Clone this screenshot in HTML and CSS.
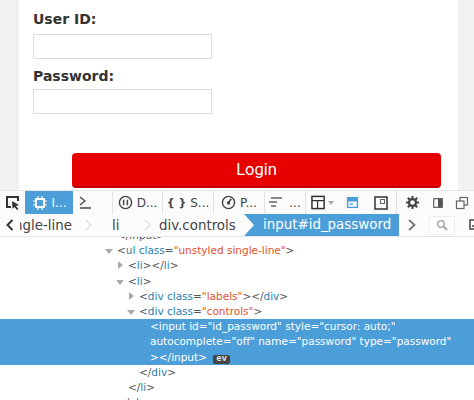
FILE: index.html
```html
<!DOCTYPE html>
<html lang="en">
<head>
<meta charset="utf-8">
<title>Login with devtools</title>
<link rel="stylesheet" href="styles.css">
</head>
<body>
<section class="page">
  <div class="card">
    <label class="label first">User ID:</label>
    <div class="field"></div>
    <label class="label second">Password:</label>
    <div class="field"></div>
    <button class="login">Login</button>
  </div>
</section>
<div class="toolbar">
  <div class="tool picker"><svg width="16" height="16" viewBox="0 0 16 16"><path d="M6 12H2V2h11v4" fill="none" stroke="#333" stroke-width="2"/><path d="M7 6l7 4-3 1 2.500 3-1.500 1-2.500-3-2 2z" fill="#333"/></svg></div>
  <div class="tool inspector active"><svg width="16" height="16" viewBox="0 0 16 16"><rect x="4" y="4" width="8" height="8" fill="none" stroke="#fff" stroke-width="2"/><path d="M6 1v3M10 1v3M6 12v3M10 12v3M1 6h3M1 10h3M12 6h3M12 10h3" stroke="#fff" stroke-width="1.200"/></svg><span>I...</span></div>
  <div class="tool console"><svg width="16" height="16" viewBox="0 0 16 16"><path d="M3 2l5 4-5 4" fill="none" stroke="#444" stroke-width="1.300"/><path d="M3 13h11" stroke="#444" stroke-width="1.500"/></svg></div>
  <div class="tool debugger sep"><svg width="15" height="15" viewBox="0 0 16 16"><circle cx="8" cy="8" r="6.500" fill="none" stroke="#444" stroke-width="1.500"/><path d="M6 5v6M10 5v6" stroke="#444" stroke-width="1.600"/></svg><span>D...</span></div>
  <div class="tool style sep"><span class="braces">{ }</span><span>S...</span></div>
  <div class="tool perf sep"><svg width="15" height="15" viewBox="0 0 16 16"><circle cx="8" cy="8" r="6.500" fill="none" stroke="#444" stroke-width="1.500"/><path d="M8 8l3-4" stroke="#444" stroke-width="1.500"/><circle cx="8" cy="8.500" r="1.800" fill="#444"/></svg><span>P...</span></div>
  <div class="tool network sep"><svg width="14" height="13" viewBox="0 0 14 13"><path d="M2 2h11M0 6h8M2 10h5" stroke="#666" stroke-width="1.700"/></svg><span>...</span></div>
  <div class="tool layout sep"><svg width="15" height="15" viewBox="0 0 16 16"><rect x="1" y="1.500" width="13" height="13" fill="none" stroke="#333" stroke-width="1.600"/><path d="M1 6h13M7 6v8" stroke="#333" stroke-width="1.300"/></svg><i class="caret"></i></div>
  <div class="tool dock"><svg width="13" height="13" viewBox="0 0 14 14"><rect x="1" y="1" width="12" height="12" fill="#4c9ed9"/><rect x="2.500" y="6" width="9" height="5.500" fill="#fff"/><rect x="3.500" y="8" width="4" height="1.500" fill="#4c9ed9"/></svg></div>
  <div class="tool frame"><svg width="14" height="14" viewBox="0 0 14 14"><rect x="1" y="1" width="12" height="12" fill="none" stroke="#333" stroke-width="1.500"/><rect x="6.500" y="3.500" width="4" height="4" fill="none" stroke="#666"/></svg></div>
  <div class="tool gear"><svg width="15" height="15" viewBox="0 0 16 16"><circle cx="8" cy="8" r="3.700" fill="none" stroke="#444" stroke-width="2.400"/><path d="M8 1v3M8 12v3M1 8h3M12 8h3M3 3l2 2M11 11l2 2M13 3l-2 2M5 11l-2 2" stroke="#444" stroke-width="2.200"/></svg></div>
  <div class="tool side"><svg width="12" height="12" viewBox="0 0 14 14"><rect x="2" y="2" width="10" height="10" fill="none" stroke="#555" stroke-width="1.300"/><rect x="7" y="2" width="5" height="10" fill="#555"/></svg></div>
  <div class="tool windows"><svg width="14" height="14" viewBox="0 0 14 14"><rect x="5" y="1.500" width="7.500" height="7.500" fill="none" stroke="#666" stroke-width="1.200"/><rect x="1.500" y="5" width="7.500" height="7.500" fill="#fff" stroke="#666" stroke-width="1.200"/></svg></div>
</div>
<nav class="crumbs">
  <svg class="back" width="10" height="14" viewBox="0 0 10 14"><path d="M7.500 2L2.500 7l5 5" fill="none" stroke="#333" stroke-width="2"/></svg>
  <span class="crumb clip"><span>single-line</span></span>
  <svg class="chev c1" width="8" height="14" viewBox="0 0 8 14"><path d="M1 2l5 5-5 5" fill="none" stroke="#ddd" stroke-width="1.200"/></svg>
  <span class="crumb li">li</span>
  <svg class="chev c2" width="8" height="14" viewBox="0 0 8 14"><path d="M1 2l5 5-5 5" fill="none" stroke="#ddd" stroke-width="1.200"/></svg>
  <span class="crumb div">div.controls</span>
  <span class="crumb current">input#id_password</span>
  <svg class="next" width="10" height="14" viewBox="0 0 10 14"><path d="M2 2l5.500 5L2 12" fill="none" stroke="#777" stroke-width="1.800"/></svg>
  <span class="search"><svg width="12" height="12" viewBox="0 0 12 12"><circle cx="5" cy="5" r="3.300" fill="none" stroke="#aaa" stroke-width="1.600"/><path d="M7.500 7.500L11 11" stroke="#aaa" stroke-width="2"/></svg></span>
  <svg class="pick" width="6" height="14" viewBox="0 0 6 14"><path d="M6 2H1v9h5" fill="none" stroke="#444" stroke-width="1.500"/><path d="M3 8h3" stroke="#444" stroke-width="1.500"/></svg>
</nav>
<div class="tree">
  <div class="row d1 cut"><span class="p">&lt;/input&gt;</span></div>
  <div class="row d1"><i class="arrow down"></i><span class="p">&lt;</span><span class="t">ul</span> <span class="a">class</span><span class="p">=</span><span class="v">"unstyled single-line"</span><span class="p">&gt;</span></div>
  <div class="row d2"><i class="arrow right"></i><span class="p">&lt;</span><span class="t">li</span><span class="p">&gt;&lt;/</span><span class="t">li</span><span class="p">&gt;</span></div>
  <div class="row d2"><i class="arrow down"></i><span class="p">&lt;</span><span class="t">li</span><span class="p">&gt;</span></div>
  <div class="row d3"><i class="arrow right"></i><span class="p">&lt;</span><span class="t">div</span> <span class="a">class</span><span class="p">=</span><span class="v">"labels"</span><span class="p">&gt;&lt;/</span><span class="t">div</span><span class="p">&gt;</span></div>
  <div class="row d3"><i class="arrow down"></i><span class="p">&lt;</span><span class="t">div</span> <span class="a">class</span><span class="p">=</span><span class="v">"controls"</span><span class="p">&gt;</span></div>
  <div class="selected">
    <div class="row d4">&lt;input id="id_password" style="cursor: auto;"</div>
    <div class="row d4">autocomplete="off" name="password" type="password"</div>
    <div class="row d4">&gt;&lt;/input&gt; <span class="ev">ev</span></div>
  </div>
  <div class="row d3"><span class="p">&lt;/</span><span class="t">div</span><span class="p">&gt;</span></div>
  <div class="row d2"><span class="p">&lt;/</span><span class="t">li</span><span class="p">&gt;</span></div>
  <div class="row d2b"><span class="p">&lt;/</span><span class="t">ul</span><span class="p">&gt;</span></div>
</div>
</body>
</html>
```
FILE: styles.css
```css
html, body {
  margin: 0;
  padding: 0;
  height: 400px;
  overflow: hidden;
  background: #fff;
  font-family: "DejaVu Sans", sans-serif;
}
.page {
  height: 190px;
  background: #f1f1f1;
  padding: 0 16px 0 19px;
  box-sizing: border-box;
}
.card {
  height: 190px;
  background: #fff;
  padding: 11px 0 0 14px;
  box-sizing: border-box;
}
.label {
  display: block;
  font-size: 14px;
  font-weight: bold;
  line-height: 17px;
  color: #333;
}
.first { margin-bottom: 6px; }
.second { margin-top: 9px; margin-bottom: 4px; }
.field {
  width: 179px;
  height: 25px;
  box-sizing: border-box;
  border: 1px solid #ddd;
  background: #fff;
}
.login {
  display: block;
  width: 369px;
  height: 35px;
  margin: 39px 0 0 39px;
  padding: 0;
  border: 0;
  border-bottom: 2px solid #c00000;
  border-radius: 4px;
  background: #e60000;
  color: #fff;
  font: 16.500px/32px Roboto, sans-serif;
}
.toolbar {
  display: flex;
  height: 24px;
  background: #fbfbfb;
  border-top: 1px solid #e6e6e6;
  box-sizing: border-box;
  color: #444;
  font-size: 12px;
}
.tool {
  display: flex;
  align-items: center;
  justify-content: center;
  gap: 4px;
  flex: none;
  box-sizing: border-box;
}
.tool.sep { border-left: 1px solid #e4e4e4; }
.picker { width: 25px; }
.inspector { width: 48px; color: #fff; background: #4c9ed9; }
.console { width: 39px; justify-content: flex-start; padding-left: 4px; }
.debugger { width: 50px; }
.style { width: 51px; }
.perf { width: 51px; }
.network { width: 41px; gap: 6px; }
.layout { width: 34px; gap: 2px; }
.dock { width: 26px; }
.frame { width: 32px; border-right: 1px solid #ddd; }
.gear { width: 30px; }
.side { width: 22px; }
.windows { width: 25px; }
.braces { font-weight: bold; font-size: 11px; }
.caret {
  width: 0;
  height: 0;
  border: 3px solid transparent;
  border-top: 4px solid #aaa;
  border-bottom: 0;
}
.crumbs {
  display: flex;
  align-items: center;
  height: 22px;
  background: #fcfcfc;
  border-bottom: 1px solid #e6e6e6;
  font-size: 13.400px;
  color: #444;
  white-space: nowrap;
}
.back { margin-left: 5px; flex: none; }
.crumb.clip {
  width: 52px;
  margin-left: 5px;
  overflow: hidden;
  direction: rtl;
  flex: none;
}
.chev { flex: none; }
.c1 { margin-left: 13px; }
.li { margin-left: 19px; width: 9px; flex: none; }
.c2 { margin-left: 23px; }
.div { margin-left: 7px; width: 81px; flex: none; }
.current {
  margin-left: 4px;
  width: 155px;
  flex: none;
  height: 22px;
  line-height: 22px;
  padding-left: 19px;
  box-sizing: border-box;
  background: #4c9ed9;
  color: #fff;
  clip-path: polygon(0 0, 100% 0, 100% 100%, 0 100%, 10px 50%);
}
.next { margin-left: 8px; flex: none; }
.search {
  display: flex;
  align-items: center;
  justify-content: center;
  box-sizing: border-box;
  width: 26px;
  height: 19px;
  margin-left: 12px;
  border: 1px solid #eee;
  background: #fff;
  flex: none;
}
.pick { margin-left: 14px; flex: none; }
.tree {
  font-size: 10.500px;
  line-height: 15.200px;
  color: #555;
  white-space: nowrap;
  overflow: hidden;
  height: 164px;
}
.row { position: relative; height: 15.200px; }
.cut { margin-top: -9px; }
.d1 { padding-left: 117px; }
.d2 { padding-left: 128px; }
.d3 { padding-left: 139px; }
.d4 { padding-left: 150px; }
.d2b { padding-left: 117px; }
.p { color: #555; }
.t { color: #2a7fb0; }
.a { color: #2a7fb0; }
.v { color: #e0522d; }
.arrow {
  position: absolute;
  width: 0;
  height: 0;
  border-style: solid;
  border-color: transparent;
}
.arrow.down {
  margin-left: -12px;
  margin-top: 6px;
  border-width: 5px 4px 0;
  border-top-color: #aaa;
}
.arrow.right {
  margin-left: -10px;
  margin-top: 3px;
  border-width: 4px 0 4px 5px;
  border-left-color: #aaa;
}
.selected {
  height: 45.600px;
  background: #4c9ed9;
  color: #fff;
}
.ev {
  display: inline-block;
  margin-left: 3px;
  padding: 0 3px;
  height: 9px;
  line-height: 8px;
  font-size: 8px;
  font-weight: bold;
  border-radius: 2px;
  background: #444;
  color: #ddd;
}
```
